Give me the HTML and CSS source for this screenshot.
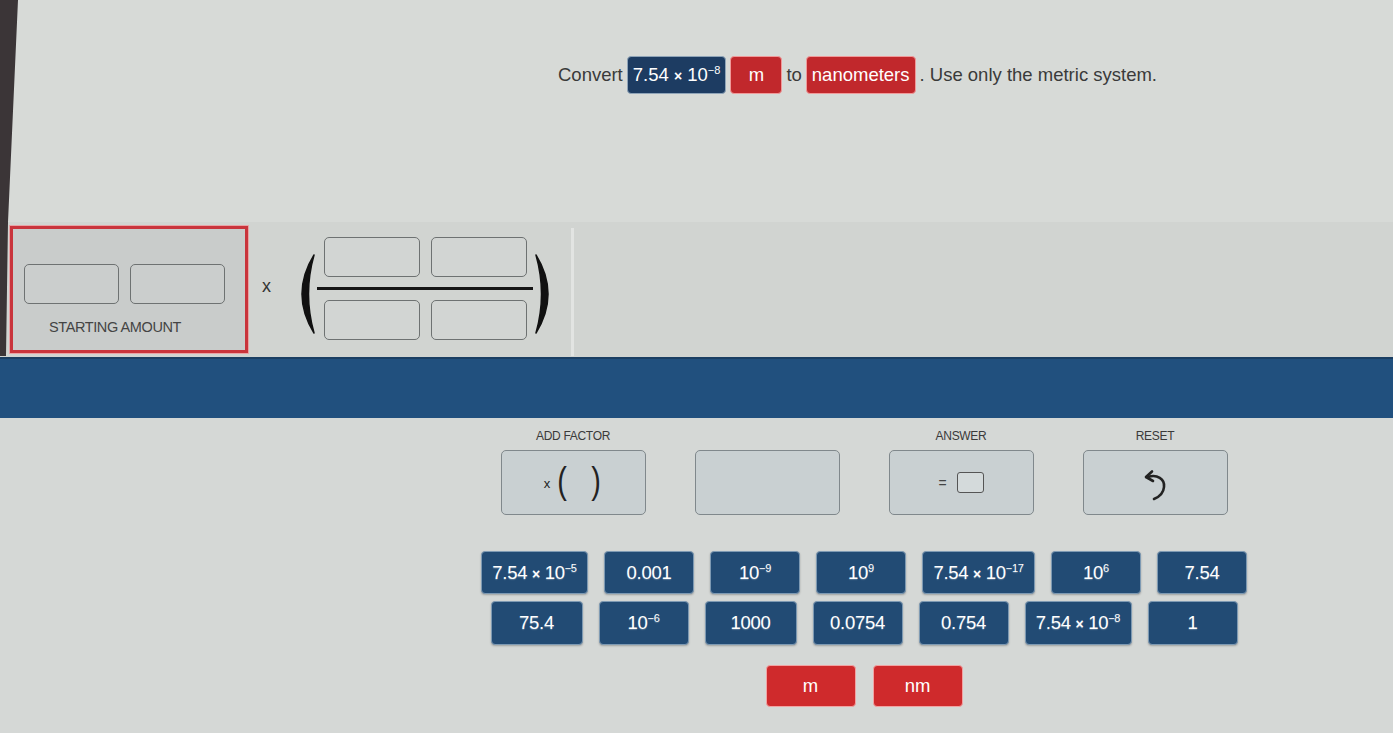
FILE: index.html
```html
<!DOCTYPE html>
<html>
<head>
<meta charset="utf-8">
<link rel="stylesheet" href="styles.css">
</head>
<body>
<div class="bezel"></div>
<div class="top">
  <div class="prompt">
    <span class="ptext">Convert</span>
    <span class="chip chip-blue"><span>7.54 <span class="times">×</span> 10<sup>−8</sup></span></span>
    <span class="chip chip-red chip-m">m</span>
    <span class="ptext">to</span>
    <span class="chip chip-red">nanometers</span>
    <span class="ptext">. Use only the metric system.</span>
  </div>
</div>

<div class="work">
  <div class="start">
    <div class="slots">
      <div class="slot"></div>
      <div class="slot"></div>
    </div>
    <div class="start-label">STARTING AMOUNT</div>
  </div>
  <div class="mult">x</div>
  <svg class="paren" width="22" height="82" viewBox="0 0 22 82"><path d="M19 2 Q-5 41 19 80 Q8 41 19 2 Z" fill="#111" stroke="#111" stroke-width="1.5" stroke-linejoin="round"/></svg>
  <div class="fraction">
    <div class="slots frac-row">
      <div class="slot"></div>
      <div class="slot"></div>
    </div>
    <div class="frac-line"></div>
    <div class="slots frac-row">
      <div class="slot"></div>
      <div class="slot"></div>
    </div>
  </div>
  <svg class="paren paren-r" width="22" height="82" viewBox="0 0 22 82"><path d="M3 2 Q27 41 3 80 Q14 41 3 2 Z" fill="#111" stroke="#111" stroke-width="1.5" stroke-linejoin="round"/></svg>
  <div class="vsep"></div>
</div>

<div class="band"></div>

<div class="bottom">
  <div class="controls">
    <div class="ctrl">
      <div class="ctrl-label">ADD FACTOR</div>
      <div class="ctrl-btn">
        <span class="sm-x">x</span><span class="bparen">(</span><span class="bgap"></span><span class="bparen">)</span>
      </div>
    </div>
    <div class="ctrl">
      <div class="ctrl-label">&nbsp;</div>
      <div class="ctrl-btn"></div>
    </div>
    <div class="ctrl">
      <div class="ctrl-label">ANSWER</div>
      <div class="ctrl-btn">
        <span class="eq">=</span><span class="ans-box"></span>
      </div>
    </div>
    <div class="ctrl">
      <div class="ctrl-label">RESET</div>
      <div class="ctrl-btn">
        <svg class="reset-ico" width="28" height="32" viewBox="0 0 28 32"><path d="M7 8 C16 5 24 10 23 18 C22.5 24 18 28 13 30" fill="none" stroke="#222" stroke-width="2.6" stroke-linecap="round"/><path d="M5 8 L11 2.5 M5 8 L12 12" fill="none" stroke="#222" stroke-width="2.6" stroke-linecap="round"/></svg>
      </div>
    </div>
  </div>

  <div class="tiles">
    <div class="tile-row">
      <div class="tile w107"><span>7.54 <span class="times">×</span> 10<sup>−5</sup></span></div>
      <div class="tile"><span>0.001</span></div>
      <div class="tile"><span>10<sup>−9</sup></span></div>
      <div class="tile"><span>10<sup>9</sup></span></div>
      <div class="tile w113"><span>7.54 <span class="times">×</span> 10<sup>−17</sup></span></div>
      <div class="tile"><span>10<sup>6</sup></span></div>
      <div class="tile"><span>7.54</span></div>
    </div>
    <div class="tile-row">
      <div class="tile w92"><span>75.4</span></div>
      <div class="tile"><span>10<sup>−6</sup></span></div>
      <div class="tile w92"><span>1000</span></div>
      <div class="tile"><span>0.0754</span></div>
      <div class="tile"><span>0.754</span></div>
      <div class="tile w107"><span>7.54 <span class="times">×</span> 10<sup>−8</sup></span></div>
      <div class="tile"><span>1</span></div>
    </div>
  </div>

  <div class="units">
    <div class="unit">m</div>
    <div class="unit">nm</div>
  </div>
</div>
</body>
</html>
```

FILE: styles.css
```css
html, body {
  margin: 0;
  padding: 0;
}
body {
  width: 1393px;
  height: 733px;
  overflow: hidden;
  background: #d5d8d6;
  font-family: "Liberation Sans", Arial, sans-serif;
  color: #333;
  position: relative;
}
.bezel {
  position: absolute;
  left: 0;
  top: 0;
  width: 20px;
  height: 360px;
  background: #3b3537;
  clip-path: polygon(0 0, 18px 0, 8px 222px, 6px 356px, 0 356px);
  z-index: 5;
}
.top {
  height: 222px;
  box-sizing: border-box;
  padding-top: 56px;
  padding-left: 322px;
  display: flex;
  justify-content: center;
  background: #d7dad7;
}
.prompt {
  display: flex;
  align-items: center;
  height: 38px;
  font-size: 18.5px;
  color: #3a3a3a;
}
.ptext {
  margin: 0 4px;
}
.chip {
  display: inline-flex;
  align-items: center;
  height: 38px;
  box-sizing: border-box;
  padding: 0 5px;
  border-radius: 4px;
  color: #fff;
  font-size: 18.5px;
  white-space: nowrap;
}
.chip sup, .tile sup {
  font-size: 11px;
  line-height: 0;
  vertical-align: super;
}
.chip-blue {
  background: #1d3c62;
  border: 1px solid #8fa4b8;
  margin-right: 4px;
}
.chip-red {
  background: #c1282c;
  border: 1px solid #f09a9a;
}
.chip-m {
  width: 52px;
  justify-content: center;
}
.times {
  font-size: 14px;
  font-weight: bold;
}

.work {
  height: 135px;
  box-sizing: border-box;
  padding-top: 4px;
  padding-left: 10px;
  display: flex;
  align-items: flex-start;
  background: #d1d4d1;
}
.start {
  width: 238px;
  height: 127px;
  box-sizing: border-box;
  border: 3px solid #c9343c;
  box-shadow: 0 0 0 1px #e9a3a6;
  background: #c9cccb;
  padding: 35px 0 0 11px;
  display: flex;
  flex-direction: column;
}
.slots {
  display: flex;
  gap: 11px;
}
.slot {
  width: 95px;
  height: 40px;
  box-sizing: border-box;
  border: 1px solid #6e7272;
  border-radius: 5px;
  background: #d2d5d3;
}
.start .slot {
  background: #cbcecd;
}
.start-label {
  margin-top: 15px;
  font-size: 14.5px;
  color: #444;
  padding-left: 25px;
  letter-spacing: -0.4px;
}
.mult {
  margin-left: 14px;
  margin-top: 50px;
  font-size: 18px;
  color: #333;
}
.paren {
  margin-top: 27px;
  margin-left: 24px;
}
.paren-r {
  margin-left: 0;
}
.fraction {
  margin-top: 11px;
  margin-left: 0;
  display: flex;
  flex-direction: column;
  align-items: center;
  width: 216px;
}
.frac-row .slot {
  width: 96px;
}
.frac-line {
  width: 216px;
  height: 3px;
  background: #151515;
  margin: 10px 0;
}
.vsep {
  width: 3px;
  height: 128px;
  background: #e2e4e2;
  margin-left: 16px;
  margin-top: 2px;
}

.band {
  height: 59px;
  background: #21507e;
  border-top: 2px solid #1b3f63;
}

.bottom {
  padding-left: 335px;
  display: flex;
  flex-direction: column;
  align-items: center;
}
.controls {
  display: flex;
  gap: 49px;
  margin-top: 11px;
}
.ctrl {
  display: flex;
  flex-direction: column;
  align-items: center;
  width: 145px;
}
.ctrl-label {
  font-size: 12px;
  color: #3a3a3a;
  height: 15px;
  margin-bottom: 6px;
  letter-spacing: -0.3px;
}
.ctrl-btn {
  width: 145px;
  height: 65px;
  box-sizing: border-box;
  border: 1px solid #80888c;
  border-radius: 5px;
  background: #c9d0d2;
  display: flex;
  align-items: center;
  justify-content: center;
  color: #222;
}
.sm-x {
  font-size: 13px;
  margin-right: 6px;
  margin-top: 2px;
}
.bparen {
  font-size: 36px;
  font-weight: 300;
  line-height: 1;
  margin-top: -4px;
  transform: scaleX(0.8);
}
.bgap {
  width: 22px;
}
.eq {
  font-size: 14px;
  margin-right: 10px;
  color: #444;
}
.ans-box {
  width: 25px;
  height: 19px;
  border: 1px solid #555;
  border-radius: 3px;
  background: #d4dadb;
}
.reset-ico {
  margin-top: 4px;
}

.tiles {
  margin-top: 36px;
  display: flex;
  flex-direction: column;
  align-items: center;
  gap: 7px;
}
.tile-row {
  display: flex;
  gap: 16px;
}
.tile {
  width: 90px;
  height: 43px;
  box-sizing: border-box;
  background: #224b74;
  border: 1px solid #7e9ab3;
  border-radius: 4px;
  color: #fff;
  font-size: 18.5px;
  display: flex;
  align-items: center;
  justify-content: center;
  white-space: nowrap;
  letter-spacing: -0.3px;
  text-shadow: 0 1px 1px rgba(255,255,255,0.25);
  box-shadow: 0 1px 2px rgba(0,0,0,0.25);
}
.tile-row:nth-child(2) .tile {
  height: 44px;
}
.w92 { width: 92px; }
.w107 { width: 107px; }
.w113 { width: 113px; }

.units {
  display: flex;
  gap: 17px;
  margin-top: 20px;
}
.unit {
  width: 90px;
  height: 42px;
  box-sizing: border-box;
  background: #cf2a2c;
  border: 1px solid #f2a3a3;
  border-radius: 4px;
  color: #fff;
  font-size: 18.5px;
  display: flex;
  align-items: center;
  justify-content: center;
}
```
